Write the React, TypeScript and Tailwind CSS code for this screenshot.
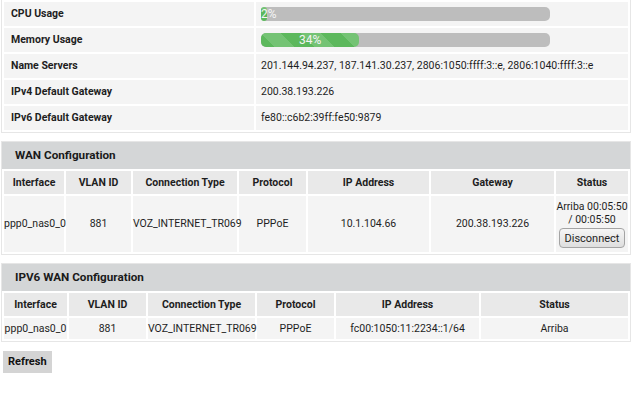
import type { ReactNode } from "react";

const stripes =
  "bg-[linear-gradient(45deg,rgba(255,255,255,.15)_25%,transparent_25%,transparent_50%,rgba(255,255,255,.15)_50%,rgba(255,255,255,.15)_75%,transparent_75%,transparent)] bg-[length:40px_40px]";

function Bar({ value, center }: { value: number; center?: boolean }) {
  return (
    <div className="h-[14px] w-[289px] overflow-visible rounded-[5px] bg-[#bdbdbd]">
      <div
        className={`flex h-full items-center overflow-visible whitespace-nowrap rounded-[5px] bg-[#5cb85c] text-[12px] leading-none text-[#f4f4f4] ${stripes} ${
          center ? "justify-center" : "justify-start"
        }`}
        style={{ width: `${value}%` }}
      >
        {value}%
      </div>
    </div>
  );
}

function InfoRow({ label, children }: { label: string; children: ReactNode }) {
  return (
    <tr>
      <td className="h-[24px] w-[250px] bg-[#f4f4f4] pl-[7px] font-bold">{label}</td>
      <td className="bg-[#f4f4f4] pl-[5px]">{children}</td>
    </tr>
  );
}

function Section({ title, children }: { title: string; children: ReactNode }) {
  return (
    <div className="border border-[#e6e6e6]">
      <div className="flex h-[27px] items-center bg-[#d4d6d7] pl-[13px] text-[11.7px] font-bold text-[#1a1a1a]">
        {title}
      </div>
      {children}
    </div>
  );
}

const th = "h-[23px] bg-[#e9e9e9] px-0 text-center font-bold";
const td = "bg-[#f4f4f4] px-0 text-center";

export default function App() {
  return (
    <div className="min-h-screen w-[640px] bg-white font-['Roboto','Liberation_Sans',sans-serif] text-[10.5px] text-[#1e1e1e]">
      <div className="w-[631px] pl-[1px]">
        <div className="border border-[#e6e6e6] border-t-0">
          <table className="w-full border-separate border-spacing-[2px]">
            <tbody>
              <InfoRow label="CPU Usage">
                <Bar value={2} />
              </InfoRow>
              <InfoRow label="Memory Usage">
                <Bar value={34} center />
              </InfoRow>
              <InfoRow label="Name Servers">
                201.144.94.237, 187.141.30.237, 2806:1050:ffff:3::e, 2806:1040:ffff:3::e
              </InfoRow>
              <InfoRow label="IPv4 Default Gateway">200.38.193.226</InfoRow>
              <InfoRow label="IPv6 Default Gateway">fe80::c6b2:39ff:fe50:9879</InfoRow>
            </tbody>
          </table>
        </div>

        <div className="mt-[8px]">
          <Section title="WAN Configuration">
            <table className="w-full table-fixed border-separate border-spacing-[2px]">
              <thead>
                <tr>
                  <th className={`${th} w-[60px]`}>Interface</th>
                  <th className={`${th} w-[65px]`}>VLAN ID</th>
                  <th className={`${th} w-[104px]`}>Connection Type</th>
                  <th className={`${th} w-[67px]`}>Protocol</th>
                  <th className={`${th} w-[121px]`}>IP Address</th>
                  <th className={`${th} w-[123px]`}>Gateway</th>
                  <th className={th}>Status</th>
                </tr>
              </thead>
              <tbody>
                <tr>
                  <td className={`${td} h-[56px]`}>ppp0_nas0_0</td>
                  <td className={td}>881</td>
                  <td className={td}>VOZ_INTERNET_TR069</td>
                  <td className={td}>PPPoE</td>
                  <td className={td}>10.1.104.66</td>
                  <td className={td}>200.38.193.226</td>
                  <td className={`${td} leading-[13px]`}>
                    <span className="whitespace-nowrap">Arriba 00:05:50</span>
                    <br />/ 00:05:50
                    <br />
                    <button className="mt-[2px] h-[20px] rounded-[4px] border border-[#a4a4a4] bg-[linear-gradient(#f6f6f6,#dedede)] px-[5px] text-[11px] text-[#1e1e1e]">
                      Disconnect
                    </button>
                  </td>
                </tr>
              </tbody>
            </table>
          </Section>
        </div>

        <div className="mt-[8px]">
          <Section title="IPV6 WAN Configuration">
            <table className="w-full table-fixed border-separate border-spacing-[2px]">
              <thead>
                <tr>
                  <th className={`${th} w-[63px]`}>Interface</th>
                  <th className={`${th} w-[77px]`}>VLAN ID</th>
                  <th className={`${th} w-[107px]`}>Connection Type</th>
                  <th className={`${th} w-[77px]`}>Protocol</th>
                  <th className={`${th} w-[143px]`}>IP Address</th>
                  <th className={th}>Status</th>
                </tr>
              </thead>
              <tbody>
                <tr>
                  <td className={`${td} h-[21px]`}>ppp0_nas0_0</td>
                  <td className={td}>881</td>
                  <td className={td}>VOZ_INTERNET_TR069</td>
                  <td className={td}>PPPoE</td>
                  <td className={td}>fc00:1050:11:2234::1/64</td>
                  <td className={td}>Arriba</td>
                </tr>
              </tbody>
            </table>
          </Section>
        </div>

        <button className="mt-[9px] ml-[2px] h-[22px] bg-[#d4d4d4] px-[5px] text-[11px] font-bold text-[#111]">
          Refresh
        </button>
      </div>
    </div>
  );
}
